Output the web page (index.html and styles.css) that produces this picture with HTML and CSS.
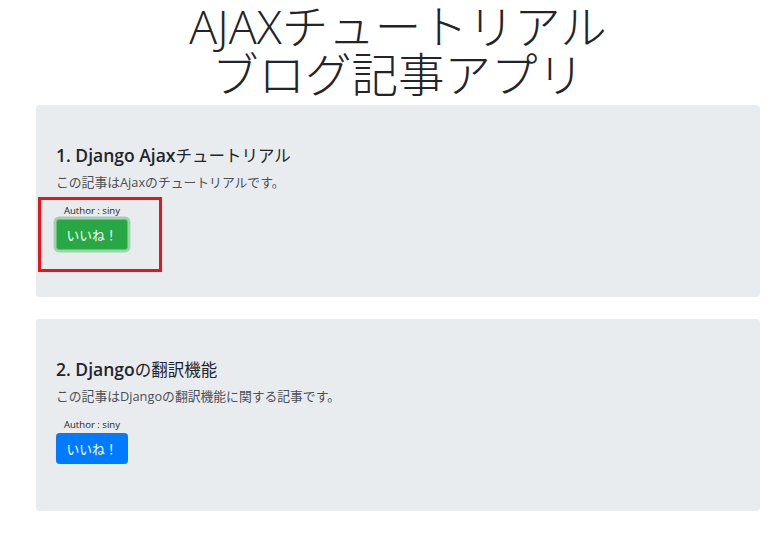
FILE: index.html
```html
<!DOCTYPE html>
<html lang="ja">
<head>
<meta charset="utf-8">
<title>AJAXチュートリアル ブログ記事アプリ</title>
<link rel="stylesheet" href="styles.css">
</head>
<body>
<div class="wrap">
  <h1 class="title">AJAXチュートリアル<br>ブログ記事アプリ</h1>
  <section class="card">
    <h2 class="card-title"><span class="lat">1. Django Ajax</span>チュートリアル</h2>
    <p class="card-text">この記事はAjaxのチュートリアルです。</p>
    <div class="like">
      <span class="author">Author : siny</span>
      <button class="btn btn-green">いいね！</button>
    </div>
    <div class="mark"></div>
  </section>
  <section class="card">
    <h2 class="card-title"><span class="lat">2. Django</span>の翻訳機能</h2>
    <p class="card-text">この記事はDjangoの翻訳機能に関する記事です。</p>
    <div class="like">
      <span class="author">Author : siny</span>
      <button class="btn btn-blue">いいね！</button>
    </div>
  </section>
</div>
</body>
</html>
```
FILE: styles.css
```css
html, body {
  margin: 0;
  padding: 0;
  background: #fff;
}
body {
  font-family: "Open Sans", "Noto Sans CJK JP", sans-serif;
  color: #212529;
  font-size: 12.8px;
}
.wrap {
  margin: 0 8px 0 36px;
  display: flex;
  flex-direction: column;
  gap: 22px;
}
.title {
  margin: 0 0 -15px;
  padding-top: 2px;
  font-size: 46.5px;
  font-weight: 300;
  line-height: 48px;
  text-align: center;
  color: #212529;
}
.card {
  position: relative;
  background: #e9ecef;
  border-radius: 4px;
  padding: 41px 20px 50px;
  height: 192px;
  box-sizing: border-box;
}
.card-title {
  margin: 0 0 8px;
  font-size: 16.5px;
  font-weight: 400;
  line-height: 19.2px;
}
.card-title .lat {
  font-size: 17.5px;
  font-weight: 600;
}
.card-text {
  margin: 0 0 8px;
  font-size: 12.8px;
  line-height: 19.2px;
  color: #4a4f55;
}
.like {
  display: inline-flex;
  flex-direction: column;
  align-items: center;
}
.author {
  font-size: 9.6px;
  line-height: 15.4px;
  color: #212529;
}
.btn {
  font-family: "Noto Sans CJK JP", sans-serif;
  font-size: 12.8px;
  line-height: 19.2px;
  padding: 0;
  white-space: nowrap;
  border-radius: 3.2px;
  color: #fff;
  border: 1px solid transparent;
  width: 72px;
  height: 31px;
  box-sizing: border-box;
  text-align: center;
}
.btn-green {
  background: #28a745;
  border-color: #5bc776;
  box-shadow: 0 0 0 2.5px rgba(72, 180, 97, 0.45);
}
.btn-blue {
  background: #007bff;
  border-color: #007bff;
}
.mark {
  position: absolute;
  left: 2px;
  top: 92px;
  width: 124px;
  height: 75px;
  border: 3px solid #e8141c;
  box-sizing: border-box;
}
```
